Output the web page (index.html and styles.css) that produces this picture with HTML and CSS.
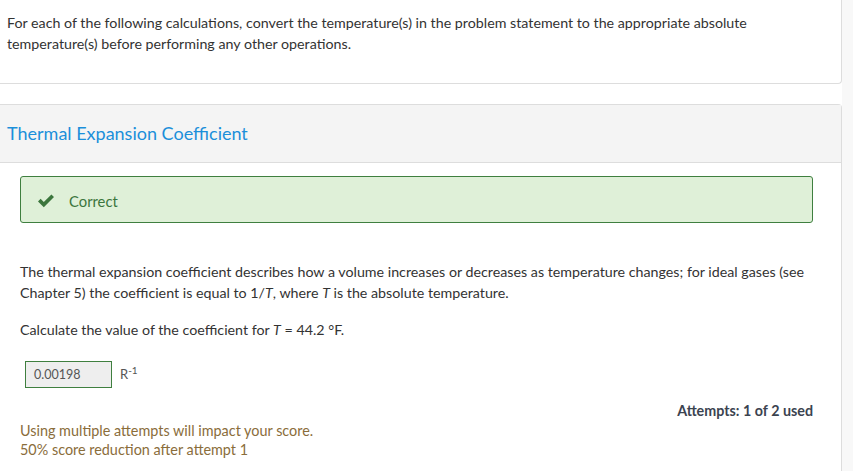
FILE: index.html
```html
<!DOCTYPE html>
<html>
<head>
    <meta name="viewport" content="width=device-width, initial-scale=1">
    <title>Thermal Expansion Coefficient</title>
    <link rel="stylesheet" href="styles.css">
</head>
<body>
    <div class="page">
        <div class="main">
            <div class="card intro">
                <p>For each of the following calculations, convert the temperature(s) in the problem statement to the appropriate absolute temperature(s) before performing any other operations.</p>
            </div>

            <div class="card question">
                <div class="question-header">
                    <h2>Thermal Expansion Coefficient</h2>
                </div>
                <div class="question-body">
                    <div class="alert-correct">
                        <svg class="check" width="16" height="14" viewBox="0 0 16 14">
                            <path d="M0 7.4 L2.6 4.8 L5.8 8 L13.4 0.4 L16 3 L5.8 13.2 Z" fill="#3c763d"/>
                        </svg>
                        <span>Correct</span>
                    </div>

                    <p class="text">The thermal expansion coefficient describes how a volume increases or decreases as temperature changes; for ideal gases (see Chapter 5) the coefficient is equal to 1/<i>T</i>, where <i>T</i> is the absolute temperature.</p>
                    <p class="text">Calculate the value of the coefficient for <i>T</i> = 44.2 °F.</p>

                    <div class="answer">
                        <div class="answer-box">0.00198</div>
                        <span class="unit">R<sup>-1</sup></span>
                    </div>

                    <div class="attempts">Attempts: 1 of 2 used</div>
                    <div class="warning">
                        Using multiple attempts will impact your score.<br>
                        50% score reduction after attempt 1
                    </div>
                </div>
            </div>
        </div>
        <div class="side"></div>
    </div>
</body>
</html>
```

FILE: styles.css
```css
body {
    font-family: Lato, "Open Sans", Arial, sans-serif;
    margin: 0;
    background-color: #fff;
    color: #333;
}
.page {
    display: flex;
    min-height: 471px;
}
.main {
    width: 842px;
    flex-shrink: 0;
}
.side {
    flex: 1;
    background-color: #f8f8f8;
}
.card {
    border: 1px solid #ddd;
    border-left: none;
    background-color: #fff;
}
.intro {
    border-top: none;
    border-radius: 0 0 4px 0;
    height: 84px;
    box-sizing: border-box;
    padding: 12px 7px;
}
.intro p {
    margin: 0;
    font-size: 14.25px;
    line-height: 21px;
    color: #333;
}
.question {
    margin-top: 20px;
    border-bottom: none;
    border-radius: 0 4px 0 0;
}
.question-header {
    background-color: #f4f4f4;
    border-bottom: 1px solid #ddd;
    display: flex;
    align-items: center;
    padding: 0 0 2px 7px;
    box-sizing: border-box;
    height: 58px;
}
.question-header h2 {
    margin: 0;
    font-size: 18px;
    font-weight: normal;
    color: #1b8fda;
}
.question-body {
    padding: 13px 28px 12px 20px;
}
.alert-correct {
    display: flex;
    align-items: center;
    background-color: #dff0d8;
    border: 1px solid #3f7f3f;
    border-radius: 3px;
    padding: 2px 0 0 17px;
    box-sizing: border-box;
    height: 47px;
    color: #3c763d;
    font-size: 14.8px;
}
.alert-correct .check {
    margin-right: 15px;
}
.text {
    margin: 0;
    font-size: 14.25px;
    line-height: 21px;
}
.alert-correct + .text {
    margin-top: 38px;
}
.text + .text {
    margin-top: 16px;
}
.answer {
    display: flex;
    align-items: flex-start;
    margin-top: 21px;
    margin-left: 5px;
}
.answer-box {
    width: 77px;
    height: 25px;
    line-height: 25px;
    padding-left: 8px;
    background-color: #eee;
    border: 1px solid #3f7f3f;
    font-size: 12.5px;
    color: #555;
}
.unit {
    margin-left: 8px;
    margin-top: 3px;
    font-size: 13px;
    color: #555;
}
.unit sup {
    font-size: 10px;
}
.attempts {
    text-align: right;
    margin-top: 14px;
    font-size: 14.3px;
    font-weight: bold;
    color: #3b4350;
}
.warning {
    margin-top: 2px;
    font-size: 14.4px;
    line-height: 19px;
    color: #8a6d3b;
}
```
